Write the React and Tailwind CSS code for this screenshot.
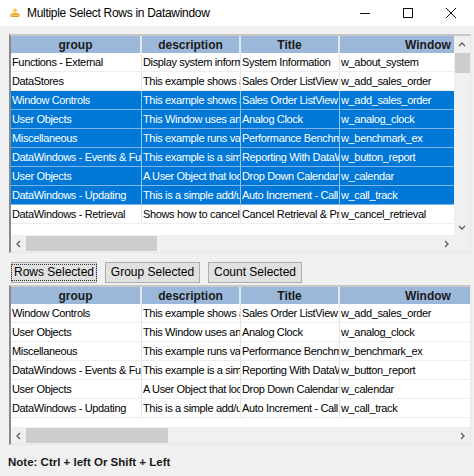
import React from 'react';

const COLS = [131, 99, 99, 178];

const topRows = [
  ['Functions - External', 'Display system information', 'System Information', 'w_about_system'],
  ['DataStores', 'This example shows a datastore', 'Sales Order ListView', 'w_add_sales_order'],
  ['Window Controls', 'This example shows a listview', 'Sales Order ListView', 'w_add_sales_order'],
  ['User Objects', 'This Window uses an analog clock', 'Analog Clock', 'w_analog_clock'],
  ['Miscellaneous', 'This example runs various tests', 'Performance Benchmark', 'w_benchmark_ex'],
  ['DataWindows - Events & Functions', 'This example is a simple report', 'Reporting With DataWindow', 'w_button_report'],
  ['User Objects', 'A User Object that looks like', 'Drop Down Calendar', 'w_calendar'],
  ['DataWindows - Updating', 'This is a simple add/update', 'Auto Increment - Call Track', 'w_call_track'],
  ['DataWindows - Retrieval', 'Shows how to cancel a retrieve', 'Cancel Retrieval & Print', 'w_cancel_retrieval'],
];

const selected = [2, 3, 4, 5, 6, 7];
const bottomRows = selected.map((i) => topRows[i]);

const font = { fontFamily: '"Liberation Sans", Arial, sans-serif' };

const Header = () => (
  <div className="flex h-[17px] shrink-0 bg-white">
    {COLS.map((w, i) => (
      <div
        key={i}
        className="shrink-0 h-full bg-[#9bb8da] border-r-2 border-[#e2e7ee] flex items-center justify-center text-[12px] font-bold text-[#1b1b1b]"
        style={{ width: w }}
      >
        {['group', 'description', 'Title', 'Window'][i]}
      </div>
    ))}
  </div>
);

const Row = ({ cells, sel }) => (
  <div
    className={
      'flex h-[19px] shrink-0 border-b ' +
      (sel ? 'bg-[#0078d7] text-white border-[#7fb4e8]' : 'bg-white text-black border-[#eeeeee]')
    }
  >
    {cells.map((c, i) => (
      <div
        key={i}
        className={
          'shrink-0 h-full overflow-hidden whitespace-nowrap pl-[1px] leading-[19px] text-[11px] tracking-[-0.35px] border-r ' +
          (sel ? 'border-[#9cc6ee]' : 'border-[#e4e4e4]')
        }
        style={{ width: COLS[i] }}
      >
        {c}
      </div>
    ))}
  </div>
);

const Chevron = ({ dir }) => {
  const d = {
    up: 'M2 6 L5 3 L8 6',
    down: 'M2 4 L5 7 L8 4',
    left: 'M6 2 L3 5 L6 8',
    right: 'M4 2 L7 5 L4 8',
  }[dir];
  return (
    <svg width="10" height="10" viewBox="0 0 10 10">
      <path d={d} fill="none" stroke="#606060" strokeWidth="1.4" />
    </svg>
  );
};

const HScroll = ({ thumb, corner }) => (
  <div className="flex h-[17px] shrink-0 bg-[#f0f0f0]">
    <div className="flex flex-1 items-center">
      <div className="w-[15px] flex justify-center"><Chevron dir="left" /></div>
      <div className="h-[15px] bg-[#cdcdcd]" style={{ width: thumb }} />
      <div className="flex-1" />
      <div className="w-[16px] flex justify-center"><Chevron dir="right" /></div>
    </div>
    {corner && <div className="w-[16px]" />}
  </div>
);

const Grid = ({ rows, sel, vscroll, height, blank, thumb }) => (
  <div
    className="ml-[9px] w-[462px] bg-white border-l-2 border-t-2 border-r border-b border-l-[#8a8a8a] border-t-[#c8c8c8] border-r-[#e8e8e8] border-b-[#e8e8e8] flex flex-col"
    style={{ height }}
  >
    <div className="flex flex-1 min-h-0">
      <div className="flex-1 min-w-0 overflow-hidden flex flex-col">
        <Header />
        {rows.map((r, i) => (
          <Row key={i} cells={r} sel={sel.includes(i)} />
        ))}
        <div style={{ height: blank }} />
      </div>
      {vscroll && (
        <div className="w-[16px] shrink-0 bg-[#f0f0f0] flex flex-col items-center">
          <div className="h-[17px] flex items-center"><Chevron dir="up" /></div>
          <div className="w-[15px] h-[20px] bg-[#cdcdcd]" />
          <div className="flex-1" />
          <div className="h-[17px] flex items-center"><Chevron dir="down" /></div>
        </div>
      )}
    </div>
    <HScroll thumb={thumb} corner={vscroll} />
  </div>
);

const Btn = ({ children, focus, w, ml }) => (
  <button
    className="h-[21px] bg-[#e1e1e1] border border-[#adadad] text-[12px] text-black flex items-center justify-center p-[2px] whitespace-nowrap"
    style={{ width: w, marginLeft: ml }}
  >
    <span
      className={
        'whitespace-nowrap px-[2px] leading-[15px] ' +
        (focus ? 'outline outline-1 outline-dotted outline-[#333]' : '')
      }
    >
      {children}
    </span>
  </button>
);

export default function App() {
  return (
    <div className="w-[474px] h-[476px] bg-[#f0f0f0] flex flex-col overflow-hidden" style={font}>
      <div className="h-[26px] bg-white flex items-center shrink-0">
        <svg width="12" height="12" viewBox="0 0 12 12" className="ml-[9px]">
          <ellipse cx="6" cy="3.2" rx="1.8" ry="1.8" fill="#f7c341" />
          <path d="M2.5 7 C3 5 9 5 9.5 7 Z" fill="#f5b82e" />
          <path d="M1 7 L11 7 L10 10 L2 10 Z" fill="#e79a2c" />
          <path d="M2 8.3 H10" stroke="#fbe08a" strokeWidth="0.8" />
        </svg>
        <span className="ml-[6px] text-[12px] tracking-[-0.3px] text-black">Multiple Select Rows in Datawindow</span>
        <div className="flex-1" />
        <svg width="12" height="12" viewBox="0 0 12 12" className="mr-[31px]">
          <path d="M1 6.5 H11" stroke="#111" strokeWidth="1" />
        </svg>
        <svg width="12" height="12" viewBox="0 0 12 12" className="mr-[31px]">
          <rect x="1.5" y="1.5" width="9" height="9" fill="none" stroke="#111" strokeWidth="1" />
        </svg>
        <svg width="12" height="12" viewBox="0 0 12 12" className="mr-[17px]">
          <path d="M1 1 L11 11 M11 1 L1 11" stroke="#111" strokeWidth="1" />
        </svg>
      </div>

      <div className="h-[8px] shrink-0" />
      <Grid rows={topRows} sel={selected} vscroll height={219} blank={11} thumb={131} />

      <div className="flex mt-[9px] shrink-0">
        <Btn focus w={86} ml={11}>Rows Selected</Btn>
        <Btn w={95} ml={8}>Group Selected</Btn>
        <Btn w={94} ml={8}>Count Selected</Btn>
      </div>

      <div className="h-[2px] shrink-0" />
      <Grid rows={bottomRows} sel={[]} height={160} blank={8} thumb={142} />

      <div className="ml-[8px] mt-[9px] text-[11.5px] font-semibold text-[#1a1a1a]">
        Note: Ctrl + left Or Shift + Left
      </div>
    </div>
  );
}
